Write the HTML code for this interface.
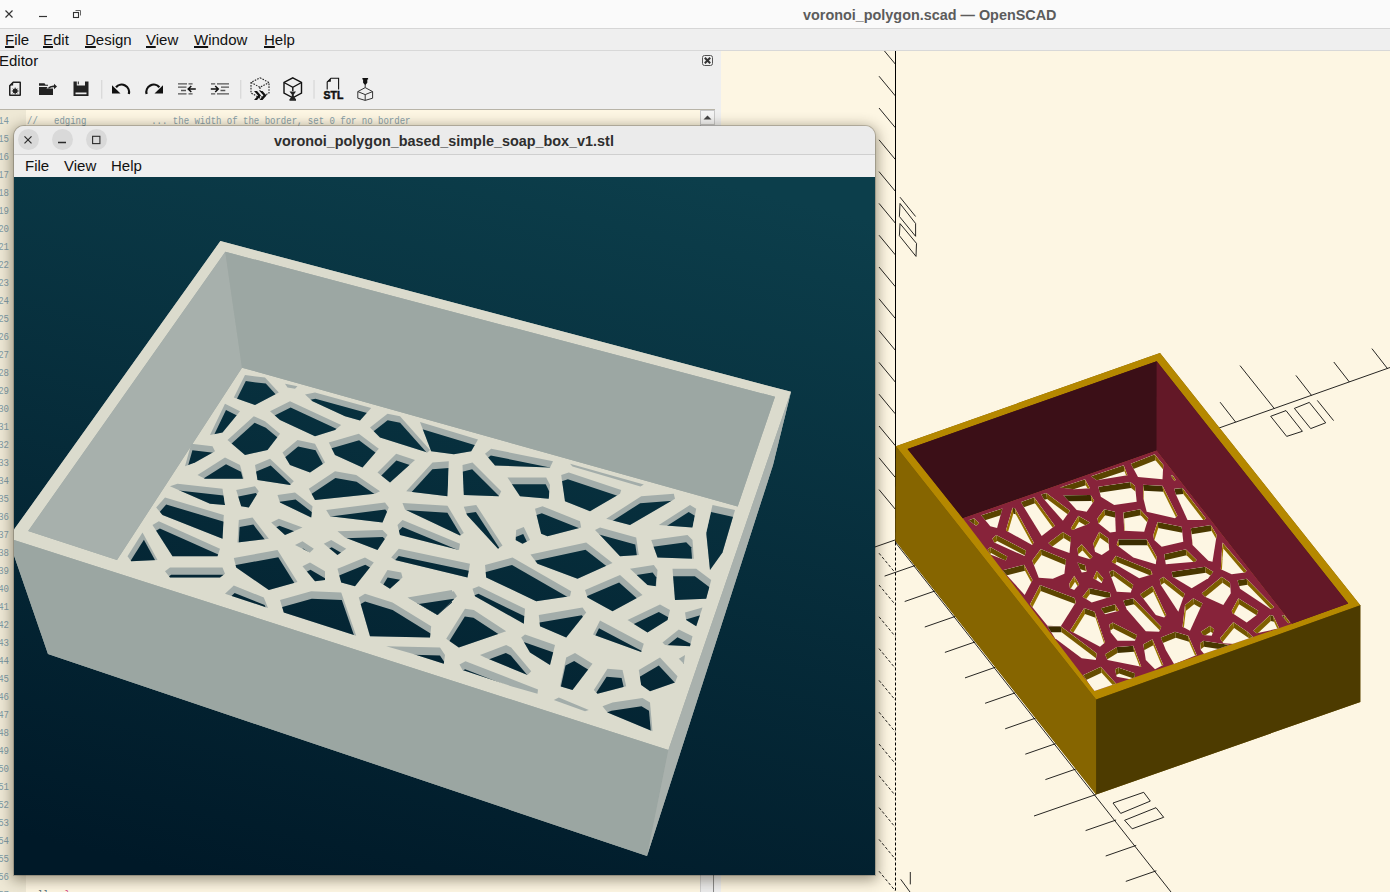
<!DOCTYPE html>
<html><head><meta charset="utf-8">
<style>
html,body{margin:0;padding:0;}
body{width:1390px;height:892px;overflow:hidden;position:relative;background:#efefef;font-family:"Liberation Sans",sans-serif;}
.abs{position:absolute;}
#titlebar{left:0;top:0;width:1390px;height:29px;background:#fafafa;border-bottom:1px solid #d6d6d6;box-sizing:border-box;}
#title{left:803px;top:7px;font-weight:bold;font-size:14.4px;color:#5c5c5c;white-space:nowrap;}
#menubar{left:0;top:29px;width:1390px;height:21px;background:#efefef;}
.mi{position:absolute;top:2px;font-size:15px;color:#111;white-space:nowrap;}
.mi u{text-decoration:underline;text-decoration-thickness:2px;text-underline-offset:1px;}
#dock{left:0;top:50px;width:721px;height:842px;background:#efefef;}
#editor{left:0;top:109px;width:715px;height:783px;background:#fdf6e3;border-top:1px solid #b8b4a8;box-sizing:border-box;overflow:hidden;}
#gutter{left:0;top:0;width:26px;height:783px;background:#eee8d5;}
.ln{position:absolute;left:-20px;width:29px;text-align:right;font-family:"Liberation Mono",monospace;font-size:10px;color:#7f9ba6;line-height:12px;transform:scaleX(0.9);transform-origin:right center;}
.code{position:absolute;left:27px;font-family:"Liberation Mono",monospace;font-size:10px;color:#88a0a8;white-space:pre;line-height:12px;transform:scaleX(0.9);transform-origin:left center;}
#view3d{left:721px;top:50px;width:669px;height:842px;background:#fdf6e3;overflow:hidden;}
#stlwin{left:14px;top:126px;width:861px;height:749px;background:#ebebeb;border-radius:10px 10px 0 0;box-shadow:0 0 0 1px rgba(0,0,0,0.18),0 3px 14px 2px rgba(40,30,10,0.45);overflow:hidden;}
#stltitle{left:0;top:0;width:861px;height:29px;background:#ebebeb;border-bottom:1px solid #cfcfcf;box-sizing:border-box;}
#stlmenu{left:0;top:29px;width:861px;height:22px;background:#efefef;}
.btn{position:absolute;top:3px;width:21px;height:21px;border-radius:50%;background:#d9d9d9;}
</style></head>
<body>
<div id="titlebar" class="abs">
  <svg class="abs" style="left:0;top:0" width="100" height="28">
    <path d="M5.5 10.5 L12.5 17.5 M12.5 10.5 L5.5 17.5" stroke="#333" stroke-width="1.2"/>
    <path d="M39 16.5 H47" stroke="#333" stroke-width="1.2"/>
    <rect x="73.5" y="12.5" width="5" height="5" fill="none" stroke="#333" stroke-width="1.1"/>
    <path d="M75.5 10.5 H80.5 V15.5" fill="none" stroke="#555" stroke-width="0.9"/>
  </svg>
  <div id="title" class="abs">voronoi_polygon.scad — OpenSCAD</div>
</div>
<div id="menubar" class="abs">
  <span class="mi" style="left:5px"><u>F</u>ile</span>
  <span class="mi" style="left:43px"><u>E</u>dit</span>
  <span class="mi" style="left:85px"><u>D</u>esign</span>
  <span class="mi" style="left:146px"><u>V</u>iew</span>
  <span class="mi" style="left:194px"><u>W</u>indow</span>
  <span class="mi" style="left:264px"><u>H</u>elp</span>
</div>
<div id="dock" class="abs">
  <div class="abs" style="left:-1px;top:2px;font-size:15px;color:#111">Editor</div>
  <svg class="abs" style="left:0;top:0" width="721" height="60" viewBox="0 50 721 60">
  <path d="M0 50.5 H721" stroke="#d8d8d8" stroke-width="1"/>
  <!-- close button -->
  <rect x="702.5" y="55.5" width="10" height="10" rx="2" fill="none" stroke="#555" stroke-width="1"/>
  <path d="M704.8 57.8 L710.2 63.2 M710.2 57.8 L704.8 63.2" stroke="#333" stroke-width="2"/>
  <g fill="#222" stroke="none">
    <!-- new -->
    <path d="M13 81.5 H20 Q21 81.5 21 82.5 V95 Q21 96 20 96 H10 Q9 96 9 95 V85.5 Z M13.6 83 L10.5 86.1 V94.5 H19.5 V83 Z" fill-rule="evenodd"/>
    <path d="M9.3 85.6 L13.1 81.8 V85.6 Z"/>
    <circle cx="15.2" cy="91" r="2.4"/>
    <path d="M15.2 87.6 V94.4 M11.8 91 H18.6 M12.8 88.6 L17.6 93.4 M17.6 88.6 L12.8 93.4" stroke="#222" stroke-width="0.9"/>
    <!-- open -->
    <path d="M39 83.2 H44.5 L45.5 84.8 H48 V85.8 H39 Z"/>
    <path d="M39 87 H47.5 L46.5 88.5 H53 V95 H39 Z"/>
    <path d="M47.5 88.2 Q50 85.3 54 85.6 V83.8 L57 86.5 L54 89.2 V87.3 Q51 87.2 49.2 88.4 Z"/>
    <!-- save -->
    <path d="M73.5 81.5 H76.8 V85.4 H85 V81.5 H88.5 V96 H73.5 Z M75.5 92.5 V94.2 H86.5 V92.5 Z" fill-rule="evenodd"/>
    <rect x="77.8" y="81.5" width="1" height="2.8"/>
  </g>
  <path d="M101.8 80 V98.7" stroke="#d2d2d2" stroke-width="1"/>
  <g fill="none" stroke="#111" stroke-width="2.2">
    <path d="M128.8 94 A7.4 7.4 0 0 0 116 87.3"/>
    <path d="M146.6 94 A7.4 7.4 0 0 1 159.4 87.3"/>
  </g>
  <g fill="#111">
    <path d="M112 85.2 L112 93.6 L120.5 93.6 Z"/>
    <path d="M163 85.2 L163 93.6 L154.5 93.6 Z"/>
  </g>
  <g stroke="#555" stroke-width="1.3">
    <path d="M178 83.9 H187 M188.5 83.9 H192.6 M178 87.2 H186.5 M181 90.5 H186 M178 93.9 H186.5 M188.5 93.9 H192.6"/>
    <path d="M211 83.9 H215.2 M217 83.9 H229 M221 87.2 H229 M220.5 90.5 H225.3 M211 93.9 H215.2 M217 93.9 H229"/>
  </g>
  <g fill="none" stroke="#111" stroke-width="1.5">
    <path d="M188 89 H195.8 M191.3 86 L188.2 89 L191.3 92"/>
    <path d="M210.8 89 H218.2 M215.2 86 L218.3 89 L215.2 92"/>
  </g>
  <path d="M240.8 80 V98.7 M314 80 V98.7" stroke="#d2d2d2" stroke-width="1"/>
  <!-- preview -->
  <g fill="none" stroke="#222" stroke-width="1.1" stroke-dasharray="1.6 1.2">
    <path d="M260 77.8 L269 82.5 V93 L260 98 L251 93 V82.5 Z"/>
    <path d="M251 82.5 L260 87.3 L269 82.5 M260 87.3 V91"/>
  </g>
  <g fill="#111">
    <path d="M254 91 H257 L261 95.5 L257 100 H254 L258 95.5 Z"/>
    <path d="M259.5 91 H262.5 L266.5 95.5 L262.5 100 H259.5 L263.5 95.5 Z"/>
  </g>
  <!-- render -->
  <g fill="none" stroke="#111" stroke-width="1.4">
    <path d="M292.8 77.8 L301.5 82.5 V93 L292.8 97.8 L284 93 V82.5 Z"/>
    <path d="M284 82.5 L292.8 87.3 L301.5 82.5 M292.8 87.3 V91"/>
  </g>
  <path d="M289.5 91.5 H296 L293.8 94.5 V96 L296 99.5 H289.5 L291.8 96 V94.5 Z" fill="#222"/>
  <rect x="289.5" y="99.2" width="6.5" height="1.5" fill="#111"/>
  <!-- STL -->
  <path d="M327.2 89.5 V82 L331 78.2 H338.6 V89.5" fill="none" stroke="#111" stroke-width="1.1"/>
  <path d="M327.3 81.8 L330.8 78.3 V81.8 Z" fill="#111"/>
  <text x="323.6" y="98.8" font-family="Liberation Sans" font-weight="bold" font-size="10" fill="#111" stroke="#111" stroke-width="0.5" textLength="19.8" lengthAdjust="spacingAndGlyphs">STL</text>
  <!-- 3d print -->
  <g fill="none" stroke="#333" stroke-width="1">
    <path d="M365.2 87.6 L372.6 91.6 V98.2 L365.2 100.4 L357.8 98.2 V91.6 Z"/>
    <path d="M357.8 91.6 L365.2 94.6 L372.6 91.6 M365.2 94.6 V100.4"/>
    <path d="M365.2 84.5 V87.6"/>
  </g>
  <path d="M362.4 78 H368.1 V79.4 H367.3 V82.8 L365.2 85.2 L363.1 82.8 V79.4 H362.4 Z" fill="#111"/>
  </svg>
</div>
<div id="editor" class="abs">
  <div id="gutter" class="abs"></div>
  <div class="ln" style="top:5.7px">14</div><div class="ln" style="top:23.7px">15</div><div class="ln" style="top:41.7px">16</div><div class="ln" style="top:59.7px">17</div><div class="ln" style="top:77.7px">18</div><div class="ln" style="top:95.7px">19</div><div class="ln" style="top:113.7px">20</div><div class="ln" style="top:131.7px">21</div><div class="ln" style="top:149.7px">22</div><div class="ln" style="top:167.7px">23</div><div class="ln" style="top:185.7px">24</div><div class="ln" style="top:203.7px">25</div><div class="ln" style="top:221.7px">26</div><div class="ln" style="top:239.7px">27</div><div class="ln" style="top:257.7px">28</div><div class="ln" style="top:275.7px">29</div><div class="ln" style="top:293.7px">30</div><div class="ln" style="top:311.7px">31</div><div class="ln" style="top:329.7px">32</div><div class="ln" style="top:347.7px">33</div><div class="ln" style="top:365.7px">34</div><div class="ln" style="top:383.7px">35</div><div class="ln" style="top:401.7px">36</div><div class="ln" style="top:419.7px">37</div><div class="ln" style="top:437.7px">38</div><div class="ln" style="top:455.7px">39</div><div class="ln" style="top:473.7px">40</div><div class="ln" style="top:491.7px">41</div><div class="ln" style="top:509.7px">42</div><div class="ln" style="top:527.7px">43</div><div class="ln" style="top:545.7px">44</div><div class="ln" style="top:563.7px">45</div><div class="ln" style="top:581.7px">46</div><div class="ln" style="top:599.7px">47</div><div class="ln" style="top:617.7px">48</div><div class="ln" style="top:635.7px">49</div><div class="ln" style="top:653.7px">50</div><div class="ln" style="top:671.7px">51</div><div class="ln" style="top:689.7px">52</div><div class="ln" style="top:707.7px">53</div><div class="ln" style="top:725.7px">54</div><div class="ln" style="top:743.7px">55</div><div class="ln" style="top:761.7px">56</div><div class="ln" style="top:779.7px">57</div>
  <div class="code" style="top:6px">//   edging            ... the width of the border, set 0 for no border</div>
  <div class="code" style="top:779.7px;color:#4a6a78">  ll</div><div class="code" style="top:779.7px;color:#d33682">       }</div>
  <div class="abs" style="left:700px;top:0;width:15px;height:783px;background:#ececec;border-left:1px solid #cfcfcf;box-sizing:border-box"></div>
  <div class="abs" style="left:700px;top:0;width:15px;height:15px;background:#f4f4f4;border:1px solid #c8c8c8;box-sizing:border-box"></div>
  <svg class="abs" style="left:700px;top:0" width="15" height="15"><path d="M3.5 9.5 H11.5 L7.5 5.5 Z" fill="#444"/></svg>
  <div class="abs" style="left:713px;top:760px;width:1px;height:23px;background:#8a8a8a"></div>

</div>
<div id="view3d" class="abs"><svg class="abs" style="left:-721px;top:-50px" width="1390" height="892" viewBox="0 0 1390 892">
  <g stroke="#000" stroke-width="0.85" fill="none">
    <path d="M895.5 50 V542.5" stroke-width="1"/>
    <path d="M895.5 542.5 V892" stroke-dasharray="3 2" stroke-width="1"/>
    <path d="M895.5 542.5 L1390 367.5"/>
    <path d="M895.5 542.5 L1171 892"/>
    <path d="M879 489.6 L895.25 509.2"/>
    <path d="M879 457.8 L895.25 477.4"/>
    <path d="M879 426.0 L895.25 445.6"/>
    <path d="M879 394.2 L895.25 413.8"/>
    <path d="M879 362.4 L895.25 382.0"/>
    <path d="M879 330.6 L895.25 350.2"/>
    <path d="M879 298.8 L895.25 318.4"/>
    <path d="M879 267.0 L895.25 286.6"/>
    <path d="M879 235.2 L895.25 254.8"/>
    <path d="M879 203.4 L895.25 223.0"/>
    <path d="M879 171.6 L895.25 191.2"/>
    <path d="M879 139.8 L895.25 159.4"/>
    <path d="M879 108.0 L895.25 127.6"/>
    <path d="M879 76.2 L895.25 95.8"/>
    <path d="M879 44.4 L895.25 64.0"/>
    <path d="M879 12.6 L895.25 32.2"/>
    <g stroke-dasharray="3 2"><path d="M879 553.2 L895.25 572.8"/><path d="M879 585.0 L895.25 604.6"/><path d="M879 616.8 L895.25 636.4"/><path d="M879 648.6 L895.25 668.2"/><path d="M879 680.4 L895.25 700.0"/><path d="M879 712.2 L895.25 731.8"/><path d="M879 744.0 L895.25 763.6"/><path d="M879 775.8 L895.25 795.4"/><path d="M879 807.6 L895.25 827.2"/><path d="M879 839.4 L895.25 859.0"/><path d="M879 871.2 L895.25 890.8"/></g>
    <path d="M1220.1 402.2 L1235.7 422.2"/><path d="M1240.0 365.6 L1274.3 408.6"/><path d="M1295.9 375.4 L1311.5 395.4"/><path d="M1333.8 362.0 L1349.4 382.0"/><path d="M1371.9 348.6 L1387.5 368.6"/>
    <path d="M864.5 550.6 L895.0 540.0"/><path d="M884.6 576.1 L915.1 565.5"/><path d="M904.7 601.5 L935.2 590.9"/><path d="M924.8 627.0 L955.3 616.4"/><path d="M944.9 652.4 L975.4 641.8"/><path d="M965.0 677.9 L995.5 667.2"/><path d="M985.1 703.3 L1015.6 692.7"/><path d="M1005.2 728.8 L1035.7 718.1"/><path d="M1025.3 754.2 L1055.8 743.6"/><path d="M1045.4 779.6 L1075.9 769.0"/><path d="M1034.0 816.0 L1096.0 794.5"/><path d="M1085.6 830.6 L1116.1 820.0"/><path d="M1105.7 856.0 L1136.2 845.4"/><path d="M1125.8 881.4 L1156.3 870.8"/><path d="M1145.9 906.9 L1176.4 896.3"/><path d="M1166.0 932.4 L1196.5 921.8"/>
    <path d="M900 197.2 L915.6 216.5"/>
    <path d="M900 203.5 L915.6 223.5 L915.6 236.3 L899.4 216.5 Z"/>
    <path d="M900 223.6 L916.5 243.4 L916 256.4 L899.4 235.7 Z"/>
    <path d="M1317.3 400.4 L1333.6 420.6"/>
    <path d="M1294.4 408.4 L1309.3 402.4 L1325.7 422.8 L1310.7 428.6 Z"/>
    <path d="M1270.7 416.3 L1286 410.6 L1302.4 431.3 L1286.7 436.4 Z"/>
    <path d="M1113 803 L1143.7 792.3 L1150.3 801.1 L1120.7 813.4 Z"/>
    <path d="M910.3 872 V884.4 M900.7 879.3 L910 892"/>
    <path d="M1124.6 820.3 L1156 807.7 L1163.7 817.3 L1132.2 828.8 Z"/>
  </g>
  <!-- box -->
  <polygon points="895.9,446.2 1160,353.1 1360.3,605.3 1360.3,702 1096.1,794.5 895.5,541" fill="#7a5c00"/>
  <polygon points="895.9,446.2 1160,353.1 1360.3,605.3 1096.1,699.5" fill="#b58800"/>
  <polygon points="895.9,446.2 1096.1,699.5 1096.1,794.5 895.5,541" fill="#866500"/>
  <polygon points="1096.1,699.5 1360.3,605.3 1360.3,702 1096.1,794.5" fill="#4d3b00"/>
  <polygon points="907.6,448.9 1156.7,361.2 1348.2,603.6 1291.9,623.8 1156.6,450.6 962.8,518.3" fill="#4a1420"/>
  <polygon points="907.6,448.9 1156.7,361.2 1156.6,450.6 962.8,518.3" fill="#3b0f17"/>
  <polygon points="1156.7,361.2 1348.2,603.6 1291.9,623.8 1156.6,450.6" fill="#631827"/>
  <polygon points="962.8,518.3 1156.6,450.6 1291.9,623.8 1094.5,691.1" fill="#87233a"/>
  <g id="scadholes"><defs><clipPath id="scadfloor"><polygon points="962.8,518.3 1156.6,450.6 1291.9,623.8 1094.5,691.1"/></clipPath><clipPath id="ch0"><polygon points="981.2,515.2 1002.4,508.4 997.1,528.1 990.3,526.3"/></clipPath><clipPath id="ch1"><polygon points="968.6,520.3 974.1,518.3 979.2,523.3 976.1,525.8"/></clipPath><clipPath id="ch2"><polygon points="1012.5,507.7 1015.0,508.2 1033.7,542.5 1032.1,545.0 1005.9,530.4"/></clipPath><clipPath id="ch3"><polygon points="1021.0,502.1 1034.2,497.3 1054.9,525.8 1041.7,535.9 1022.6,505.1"/></clipPath><clipPath id="ch4"><polygon points="1041.2,494.5 1046.3,493.0 1070.0,510.7 1062.9,520.8 1043.8,499.1"/></clipPath><clipPath id="ch5"><polygon points="992.3,538.4 996.3,534.9 1026.1,550.5 1024.6,556.1 994.3,542.5"/></clipPath><clipPath id="ch6"><polygon points="987.7,549.5 990.3,547.0 1007.4,556.6 1005.9,560.6 990.3,554.6"/></clipPath><clipPath id="ch7"><polygon points="1048.3,543.0 1062.9,531.9 1071.0,536.9 1069.5,553.1 1052.8,547.0"/></clipPath><clipPath id="ch8"><polygon points="1032.2,560.6 1040.7,549.0 1066.0,559.6 1064.4,573.8 1052.8,578.8 1038.7,577.8"/></clipPath><clipPath id="ch9"><polygon points="1130.8,463.7 1154.7,454.2 1163.3,464.7 1162.5,479.2 1138.0,477.0"/></clipPath><clipPath id="ch10"><polygon points="1090.8,476.3 1123.7,465.3 1127.5,475.3 1096.7,480.3"/></clipPath><clipPath id="ch11"><polygon points="1060.0,487.5 1085.0,479.2 1090.0,488.3 1074.2,489.2"/></clipPath><clipPath id="ch12"><polygon points="1098.3,486.7 1130.3,482.0 1135.0,485.8 1136.7,501.7 1114.2,505.0 1100.8,496.7"/></clipPath><clipPath id="ch13"><polygon points="1143.0,484.7 1162.5,485.8 1177.5,515.8 1175.0,518.3 1146.7,511.7 1143.3,498.3"/></clipPath><clipPath id="ch14"><polygon points="1063.3,495.3 1090.8,495.0 1094.2,500.8 1086.7,511.7 1076.7,510.0"/></clipPath><clipPath id="ch15"><polygon points="1097.5,518.3 1104.2,509.2 1115.0,511.7 1115.8,531.7 1110.0,532.5 1098.3,523.3"/></clipPath><clipPath id="ch16"><polygon points="1123.3,512.5 1140.0,509.2 1148.3,518.3 1144.2,531.7 1124.2,530.8"/></clipPath><clipPath id="ch17"><polygon points="1070.8,528.3 1078.3,515.8 1090.0,522.5 1085.8,525.0 1072.5,530.0"/></clipPath><clipPath id="ch18"><polygon points="1093.3,543.3 1099.2,531.7 1108.3,538.3 1109.2,550.0 1101.7,555.0 1095.0,551.7"/></clipPath><clipPath id="ch19"><polygon points="1116.7,545.0 1118.3,539.2 1146.7,539.2 1156.7,556.7 1155.8,564.2 1133.3,557.5"/></clipPath><clipPath id="ch20"><polygon points="1077.5,548.3 1081.7,544.2 1092.5,556.7 1090.0,559.2 1078.3,555.8"/></clipPath><clipPath id="ch21"><polygon points="1077.5,562.5 1085.0,565.0 1086.7,571.7 1081.7,572.5"/></clipPath><clipPath id="ch22"><polygon points="1111.7,561.7 1115.8,555.8 1150.8,570.0 1152.5,574.2 1139.2,578.3 1116.7,565.0"/></clipPath><clipPath id="ch23"><polygon points="1093.3,578.3 1096.7,570.8 1103.3,578.3 1101.7,583.3"/></clipPath><clipPath id="ch24"><polygon points="1069.2,583.8 1074.2,575.8 1079.2,584.2 1074.2,590.0 1070.0,588.3"/></clipPath><clipPath id="ch25"><polygon points="1153.3,535.0 1157.5,522.0 1181.7,526.7 1183.3,541.7 1161.7,546.7 1154.2,540.0"/></clipPath><clipPath id="ch26"><polygon points="1170.8,475.8 1172.5,475.0 1175.8,480.0 1174.2,480.8"/></clipPath><clipPath id="ch27"><polygon points="1174.2,488.7 1182.5,488.0 1205.8,518.3 1204.2,520.0 1187.5,520.0 1175.8,494.2"/></clipPath><clipPath id="ch28"><polygon points="1190.8,528.3 1210.8,525.0 1216.7,535.0 1212.5,561.7 1208.3,560.8 1192.5,545.0"/></clipPath><clipPath id="ch29"><polygon points="1222.5,542.5 1246.7,570.8 1245.0,572.5 1231.7,574.2 1220.8,569.2 1221.7,553.3"/></clipPath><clipPath id="ch30"><polygon points="1164.2,554.2 1185.8,549.2 1196.7,560.0 1195.0,561.7 1165.8,564.2"/></clipPath><clipPath id="ch31"><polygon points="1171.7,571.7 1205.0,566.7 1213.3,571.7 1208.3,578.3 1191.7,588.3 1172.5,576.7"/></clipPath><clipPath id="ch32"><polygon points="1002.5,570.3 1024.2,564.7 1032.5,580.0 1024.7,595.0 1005.0,573.3"/></clipPath><clipPath id="ch33"><polygon points="1030.0,604.2 1040.0,585.0 1074.7,598.0 1075.8,602.5 1060.8,626.3 1047.5,625.8"/></clipPath><clipPath id="ch34"><polygon points="1070.0,630.8 1084.2,608.0 1094.7,611.7 1105.0,642.5 1100.0,646.7"/></clipPath><clipPath id="ch35"><polygon points="1082.5,596.7 1089.2,588.0 1110.0,592.5 1110.8,596.7 1091.7,602.5"/></clipPath><clipPath id="ch36"><polygon points="1100.8,608.3 1115.0,604.2 1119.2,610.8 1105.0,614.2"/></clipPath><clipPath id="ch37"><polygon points="1109.2,571.7 1113.0,570.0 1133.3,584.7 1130.8,592.5 1116.7,591.7"/></clipPath><clipPath id="ch38"><polygon points="1123.3,600.5 1133.3,598.3 1161.3,626.7 1159.2,631.7 1145.8,631.3 1126.7,609.2"/></clipPath><clipPath id="ch39"><polygon points="1140.0,594.2 1152.5,585.8 1166.3,615.0 1164.2,617.5 1155.8,615.0"/></clipPath><clipPath id="ch40"><polygon points="1109.2,624.7 1112.5,622.5 1137.0,635.0 1135.0,640.8 1117.5,640.8 1110.8,632.5"/></clipPath><clipPath id="ch41"><polygon points="1047.5,626.3 1060.8,626.2 1096.7,653.3 1095.8,660.0 1081.7,658.3 1055.0,638.3"/></clipPath><clipPath id="ch42"><polygon points="1105.0,654.2 1116.7,647.0 1133.3,645.8 1141.3,666.7 1107.5,660.0"/></clipPath><clipPath id="ch43"><polygon points="1143.3,644.2 1152.5,639.2 1163.3,665.0 1155.0,669.2 1145.8,660.0"/></clipPath><clipPath id="ch44"><polygon points="1083.3,675.0 1100.8,666.7 1116.7,684.2 1112.5,693.7 1095.0,693.7"/></clipPath><clipPath id="ch45"><polygon points="1115.0,669.2 1118.3,667.5 1135.0,673.3 1134.2,680.0 1116.7,676.7"/></clipPath><clipPath id="ch46"><polygon points="1159.7,579.2 1163.3,576.7 1184.7,593.7 1178.3,611.7 1160.8,585.0"/></clipPath><clipPath id="ch47"><polygon points="1201.7,593.3 1221.7,576.7 1230.0,582.5 1230.8,593.3 1223.3,605.0 1205.0,596.7"/></clipPath><clipPath id="ch48"><polygon points="1237.5,580.3 1246.7,578.7 1274.2,607.0 1270.8,609.2 1240.0,588.7"/></clipPath><clipPath id="ch49"><polygon points="1185.0,605.0 1193.3,598.3 1202.5,603.3 1190.0,630.8 1182.5,626.7"/></clipPath><clipPath id="ch50"><polygon points="1231.7,610.8 1238.3,598.3 1258.3,610.8 1256.7,615.0 1246.7,622.5 1232.5,613.3"/></clipPath><clipPath id="ch51"><polygon points="1253.3,630.8 1270.0,615.0 1273.3,615.8 1279.2,628.3 1256.7,633.3"/></clipPath><clipPath id="ch52"><polygon points="1281.7,615.8 1284.2,615.0 1290.0,622.5 1288.3,623.3"/></clipPath><clipPath id="ch53"><polygon points="1220.0,638.3 1233.3,622.0 1247.5,631.7 1254.2,638.3 1238.3,644.2 1223.3,643.3"/></clipPath><clipPath id="ch54"><polygon points="1200.8,631.7 1210.0,625.8 1214.2,629.2 1211.7,635.8 1203.3,635.0"/></clipPath><clipPath id="ch55"><polygon points="1160.8,637.5 1175.0,631.7 1188.3,635.8 1196.7,655.0 1174.2,664.2 1165.8,650.0"/></clipPath><clipPath id="ch56"><polygon points="1200.0,643.3 1203.3,640.8 1230.0,645.0 1205.0,655.0 1200.8,650.0"/></clipPath></defs><g clip-path="url(#scadfloor)"><polygon points="981.2,515.2 1002.4,508.4 997.1,528.1 990.3,526.3" fill="#fdf6e3"/><g clip-path="url(#ch0)"><polygon points="981.2,515.2 1002.4,508.4 1003.2,514.4 982.0,521.2" fill="#594300"/></g><polygon points="968.6,520.3 974.1,518.3 979.2,523.3 976.1,525.8" fill="#fdf6e3"/><g clip-path="url(#ch1)"><polygon points="968.6,520.3 974.1,518.3 974.9,524.3 969.4,526.3" fill="#5c4500"/><polygon points="974.1,518.3 979.2,523.3 980.0,529.3 974.9,524.3" fill="#816100"/></g><polygon points="1012.5,507.7 1015.0,508.2 1033.7,542.5 1032.1,545.0 1005.9,530.4" fill="#fdf6e3"/><g clip-path="url(#ch2)"><polygon points="1012.5,507.7 1015.0,508.2 1015.8,514.2 1013.3,513.7" fill="#4e3a00"/><polygon points="1015.0,508.2 1033.7,542.5 1034.5,548.5 1015.8,514.2" fill="#936e00"/><polygon points="1005.9,530.4 1012.5,507.7 1013.3,513.7 1006.7,536.4" fill="#9b7400"/></g><polygon points="1021.0,502.1 1034.2,497.3 1054.9,525.8 1041.7,535.9 1022.6,505.1" fill="#fdf6e3"/><g clip-path="url(#ch3)"><polygon points="1021.0,502.1 1034.2,497.3 1035.0,503.3 1021.8,508.1" fill="#5c4500"/><polygon points="1034.2,497.3 1054.9,525.8 1055.7,531.8 1035.0,503.3" fill="#8c6900"/></g><polygon points="1041.2,494.5 1046.3,493.0 1070.0,510.7 1062.9,520.8 1043.8,499.1" fill="#fdf6e3"/><g clip-path="url(#ch4)"><polygon points="1041.2,494.5 1046.3,493.0 1047.1,499.0 1042.0,500.5" fill="#564100"/><polygon points="1046.3,493.0 1070.0,510.7 1070.8,516.7 1047.1,499.0" fill="#775900"/></g><polygon points="992.3,538.4 996.3,534.9 1026.1,550.5 1024.6,556.1 994.3,542.5" fill="#fdf6e3"/><g clip-path="url(#ch5)"><polygon points="992.3,538.4 996.3,534.9 997.1,540.9 993.1,544.4" fill="#7d5e00"/><polygon points="996.3,534.9 1026.1,550.5 1026.9,556.5 997.1,540.9" fill="#694f00"/></g><polygon points="987.7,549.5 990.3,547.0 1007.4,556.6 1005.9,560.6 990.3,554.6" fill="#fdf6e3"/><g clip-path="url(#ch6)"><polygon points="987.7,549.5 990.3,547.0 991.1,553.0 988.5,555.5" fill="#806000"/><polygon points="990.3,547.0 1007.4,556.6 1008.2,562.6 991.1,553.0" fill="#6b5100"/></g><polygon points="1048.3,543.0 1062.9,531.9 1071.0,536.9 1069.5,553.1 1052.8,547.0" fill="#fdf6e3"/><g clip-path="url(#ch7)"><polygon points="1048.3,543.0 1062.9,531.9 1063.7,537.9 1049.1,549.0" fill="#775900"/><polygon points="1062.9,531.9 1071.0,536.9 1071.8,542.9 1063.7,537.9" fill="#6f5300"/></g><polygon points="1032.2,560.6 1040.7,549.0 1066.0,559.6 1064.4,573.8 1052.8,578.8 1038.7,577.8" fill="#fdf6e3"/><g clip-path="url(#ch8)"><polygon points="1032.2,560.6 1040.7,549.0 1041.5,555.0 1033.0,566.6" fill="#8c6900"/><polygon points="1040.7,549.0 1066.0,559.6 1066.8,565.6 1041.5,555.0" fill="#614900"/></g><polygon points="1130.8,463.7 1154.7,454.2 1163.3,464.7 1162.5,479.2 1138.0,477.0" fill="#fdf6e3"/><g clip-path="url(#ch9)"><polygon points="1130.8,463.7 1154.7,454.2 1155.5,460.2 1131.6,469.7" fill="#5f4800"/><polygon points="1154.7,454.2 1163.3,464.7 1164.1,470.7 1155.5,460.2" fill="#886600"/></g><polygon points="1090.8,476.3 1123.7,465.3 1127.5,475.3 1096.7,480.3" fill="#fdf6e3"/><g clip-path="url(#ch10)"><polygon points="1090.8,476.3 1123.7,465.3 1124.5,471.3 1091.6,482.3" fill="#5a4400"/><polygon points="1123.7,465.3 1127.5,475.3 1128.3,481.3 1124.5,471.3" fill="#997300"/></g><polygon points="1060.0,487.5 1085.0,479.2 1090.0,488.3 1074.2,489.2" fill="#fdf6e3"/><g clip-path="url(#ch11)"><polygon points="1060.0,487.5 1085.0,479.2 1085.8,485.2 1060.8,493.5" fill="#5a4300"/><polygon points="1085.0,479.2 1090.0,488.3 1090.8,494.3 1085.8,485.2" fill="#936e00"/></g><polygon points="1098.3,486.7 1130.3,482.0 1135.0,485.8 1136.7,501.7 1114.2,505.0 1100.8,496.7" fill="#fdf6e3"/><g clip-path="url(#ch12)"><polygon points="1098.3,486.7 1130.3,482.0 1131.1,488.0 1099.1,492.7" fill="#483700"/><polygon points="1130.3,482.0 1135.0,485.8 1135.8,491.8 1131.1,488.0" fill="#7a5b00"/></g><polygon points="1143.0,484.7 1162.5,485.8 1177.5,515.8 1175.0,518.3 1146.7,511.7 1143.3,498.3" fill="#fdf6e3"/><g clip-path="url(#ch13)"><polygon points="1143.0,484.7 1162.5,485.8 1163.3,491.8 1143.8,490.7" fill="#3f3000"/><polygon points="1162.5,485.8 1177.5,515.8 1178.3,521.8 1163.3,491.8" fill="#956f00"/><polygon points="1143.3,498.3 1143.0,484.7 1143.8,490.7 1144.1,504.3" fill="#9f7700"/></g><polygon points="1063.3,495.3 1090.8,495.0 1094.2,500.8 1086.7,511.7 1076.7,510.0" fill="#fdf6e3"/><g clip-path="url(#ch14)"><polygon points="1063.3,495.3 1090.8,495.0 1091.6,501.0 1064.1,501.3" fill="#3b2c00"/><polygon points="1090.8,495.0 1094.2,500.8 1095.0,506.8 1091.6,501.0" fill="#916d00"/></g><polygon points="1097.5,518.3 1104.2,509.2 1115.0,511.7 1115.8,531.7 1110.0,532.5 1098.3,523.3" fill="#fdf6e3"/><g clip-path="url(#ch15)"><polygon points="1097.5,518.3 1104.2,509.2 1105.0,515.2 1098.3,524.3" fill="#8c6900"/><polygon points="1104.2,509.2 1115.0,511.7 1115.8,517.7 1105.0,515.2" fill="#513d00"/></g><polygon points="1123.3,512.5 1140.0,509.2 1148.3,518.3 1144.2,531.7 1124.2,530.8" fill="#fdf6e3"/><g clip-path="url(#ch16)"><polygon points="1123.3,512.5 1140.0,509.2 1140.8,515.2 1124.1,518.5" fill="#4d3a00"/><polygon points="1140.0,509.2 1148.3,518.3 1149.1,524.3 1140.8,515.2" fill="#856400"/><polygon points="1124.2,530.8 1123.3,512.5 1124.1,518.5 1125.0,536.8" fill="#9f7700"/></g><polygon points="1070.8,528.3 1078.3,515.8 1090.0,522.5 1085.8,525.0 1072.5,530.0" fill="#fdf6e3"/><g clip-path="url(#ch17)"><polygon points="1070.8,528.3 1078.3,515.8 1079.1,521.8 1071.6,534.3" fill="#916d00"/><polygon points="1078.3,515.8 1090.0,522.5 1090.8,528.5 1079.1,521.8" fill="#6c5100"/></g><polygon points="1093.3,543.3 1099.2,531.7 1108.3,538.3 1109.2,550.0 1101.7,555.0 1095.0,551.7" fill="#fdf6e3"/><g clip-path="url(#ch18)"><polygon points="1093.3,543.3 1099.2,531.7 1100.0,537.7 1094.1,549.3" fill="#946f00"/><polygon points="1099.2,531.7 1108.3,538.3 1109.1,544.3 1100.0,537.7" fill="#755800"/></g><polygon points="1116.7,545.0 1118.3,539.2 1146.7,539.2 1156.7,556.7 1155.8,564.2 1133.3,557.5" fill="#fdf6e3"/><g clip-path="url(#ch19)"><polygon points="1116.7,545.0 1118.3,539.2 1119.1,545.2 1117.5,551.0" fill="#9c7500"/><polygon points="1118.3,539.2 1146.7,539.2 1147.5,545.2 1119.1,545.2" fill="#3a2c00"/><polygon points="1146.7,539.2 1156.7,556.7 1157.5,562.7 1147.5,545.2" fill="#926d00"/></g><polygon points="1077.5,548.3 1081.7,544.2 1092.5,556.7 1090.0,559.2 1078.3,555.8" fill="#fdf6e3"/><g clip-path="url(#ch20)"><polygon points="1077.5,548.3 1081.7,544.2 1082.5,550.2 1078.3,554.3" fill="#816100"/><polygon points="1081.7,544.2 1092.5,556.7 1093.3,562.7 1082.5,550.2" fill="#876500"/><polygon points="1078.3,555.8 1077.5,548.3 1078.3,554.3 1079.1,561.8" fill="#9f7700"/></g><polygon points="1077.5,562.5 1085.0,565.0 1086.7,571.7 1081.7,572.5" fill="#fdf6e3"/><g clip-path="url(#ch21)"><polygon points="1077.5,562.5 1085.0,565.0 1085.8,571.0 1078.3,568.5" fill="#5a4400"/><polygon points="1085.0,565.0 1086.7,571.7 1087.5,577.7 1085.8,571.0" fill="#9c7500"/></g><polygon points="1111.7,561.7 1115.8,555.8 1150.8,570.0 1152.5,574.2 1139.2,578.3 1116.7,565.0" fill="#fdf6e3"/><g clip-path="url(#ch22)"><polygon points="1111.7,561.7 1115.8,555.8 1116.6,561.8 1112.5,567.7" fill="#8d6a00"/><polygon points="1115.8,555.8 1150.8,570.0 1151.6,576.0 1116.6,561.8" fill="#604800"/><polygon points="1150.8,570.0 1152.5,574.2 1153.3,580.2 1151.6,576.0" fill="#987200"/></g><polygon points="1093.3,578.3 1096.7,570.8 1103.3,578.3 1101.7,583.3" fill="#fdf6e3"/><g clip-path="url(#ch23)"><polygon points="1093.3,578.3 1096.7,570.8 1097.5,576.8 1094.1,584.3" fill="#967100"/><polygon points="1096.7,570.8 1103.3,578.3 1104.1,584.3 1097.5,576.8" fill="#866500"/></g><polygon points="1069.2,583.8 1074.2,575.8 1079.2,584.2 1074.2,590.0 1070.0,588.3" fill="#fdf6e3"/><g clip-path="url(#ch24)"><polygon points="1069.2,583.8 1074.2,575.8 1075.0,581.8 1070.0,589.8" fill="#906c00"/><polygon points="1074.2,575.8 1079.2,584.2 1080.0,590.2 1075.0,581.8" fill="#916d00"/></g><polygon points="1153.3,535.0 1157.5,522.0 1181.7,526.7 1183.3,541.7 1161.7,546.7 1154.2,540.0" fill="#fdf6e3"/><g clip-path="url(#ch25)"><polygon points="1153.3,535.0 1157.5,522.0 1158.3,528.0 1154.1,541.0" fill="#9b7400"/><polygon points="1157.5,522.0 1181.7,526.7 1182.5,532.7 1158.3,528.0" fill="#4d3a00"/></g><polygon points="1170.8,475.8 1172.5,475.0 1175.8,480.0 1174.2,480.8" fill="#fdf6e3"/><g clip-path="url(#ch26)"><polygon points="1170.8,475.8 1172.5,475.0 1173.3,481.0 1171.6,481.8" fill="#654c00"/><polygon points="1172.5,475.0 1175.8,480.0 1176.6,486.0 1173.3,481.0" fill="#8f6b00"/></g><polygon points="1174.2,488.7 1182.5,488.0 1205.8,518.3 1204.2,520.0 1187.5,520.0 1175.8,494.2" fill="#fdf6e3"/><g clip-path="url(#ch27)"><polygon points="1174.2,488.7 1182.5,488.0 1183.3,494.0 1175.0,494.7" fill="#423200"/><polygon points="1182.5,488.0 1205.8,518.3 1206.6,524.3 1183.3,494.0" fill="#8a6800"/></g><polygon points="1190.8,528.3 1210.8,525.0 1216.7,535.0 1212.5,561.7 1208.3,560.8 1192.5,545.0" fill="#fdf6e3"/><g clip-path="url(#ch28)"><polygon points="1190.8,528.3 1210.8,525.0 1211.6,531.0 1191.6,534.3" fill="#4a3800"/><polygon points="1210.8,525.0 1216.7,535.0 1217.5,541.0 1211.6,531.0" fill="#916d00"/><polygon points="1192.5,545.0 1190.8,528.3 1191.6,534.3 1193.3,551.0" fill="#9f7700"/></g><polygon points="1222.5,542.5 1246.7,570.8 1245.0,572.5 1231.7,574.2 1220.8,569.2 1221.7,553.3" fill="#fdf6e3"/><g clip-path="url(#ch29)"><polygon points="1222.5,542.5 1246.7,570.8 1247.5,576.8 1223.3,548.5" fill="#876500"/><polygon points="1220.8,569.2 1221.7,553.3 1222.5,559.3 1221.6,575.2" fill="#9f7700"/><polygon points="1221.7,553.3 1222.5,542.5 1223.3,548.5 1222.5,559.3" fill="#9f7700"/></g><polygon points="1164.2,554.2 1185.8,549.2 1196.7,560.0 1195.0,561.7 1165.8,564.2" fill="#fdf6e3"/><g clip-path="url(#ch30)"><polygon points="1164.2,554.2 1185.8,549.2 1186.6,555.2 1165.0,560.2" fill="#513d00"/><polygon points="1185.8,549.2 1196.7,560.0 1197.5,566.0 1186.6,555.2" fill="#816100"/></g><polygon points="1171.7,571.7 1205.0,566.7 1213.3,571.7 1208.3,578.3 1191.7,588.3 1172.5,576.7" fill="#fdf6e3"/><g clip-path="url(#ch31)"><polygon points="1171.7,571.7 1205.0,566.7 1205.8,572.7 1172.5,577.7" fill="#493700"/><polygon points="1205.0,566.7 1213.3,571.7 1214.1,577.7 1205.8,572.7" fill="#6e5300"/></g><polygon points="1002.5,570.3 1024.2,564.7 1032.5,580.0 1024.7,595.0 1005.0,573.3" fill="#fdf6e3"/><g clip-path="url(#ch32)"><polygon points="1002.5,570.3 1024.2,564.7 1025.0,570.7 1003.3,576.3" fill="#533e00"/><polygon points="1024.2,564.7 1032.5,580.0 1033.3,586.0 1025.0,570.7" fill="#936e00"/></g><polygon points="1030.0,604.2 1040.0,585.0 1074.7,598.0 1075.8,602.5 1060.8,626.3 1047.5,625.8" fill="#fdf6e3"/><g clip-path="url(#ch33)"><polygon points="1030.0,604.2 1040.0,585.0 1040.8,591.0 1030.8,610.2" fill="#946f00"/><polygon points="1040.0,585.0 1074.7,598.0 1075.5,604.0 1040.8,591.0" fill="#5d4600"/><polygon points="1074.7,598.0 1075.8,602.5 1076.6,608.5 1075.5,604.0" fill="#9d7500"/></g><polygon points="1070.0,630.8 1084.2,608.0 1094.7,611.7 1105.0,642.5 1100.0,646.7" fill="#fdf6e3"/><g clip-path="url(#ch34)"><polygon points="1070.0,630.8 1084.2,608.0 1085.0,614.0 1070.8,636.8" fill="#906c00"/><polygon points="1084.2,608.0 1094.7,611.7 1095.5,617.7 1085.0,614.0" fill="#5b4500"/><polygon points="1094.7,611.7 1105.0,642.5 1105.8,648.5 1095.5,617.7" fill="#9a7400"/></g><polygon points="1082.5,596.7 1089.2,588.0 1110.0,592.5 1110.8,596.7 1091.7,602.5" fill="#fdf6e3"/><g clip-path="url(#ch35)"><polygon points="1082.5,596.7 1089.2,588.0 1090.0,594.0 1083.3,602.7" fill="#8a6800"/><polygon points="1089.2,588.0 1110.0,592.5 1110.8,598.5 1090.0,594.0" fill="#4f3c00"/><polygon points="1110.0,592.5 1110.8,596.7 1111.6,602.7 1110.8,598.5" fill="#9e7600"/></g><polygon points="1100.8,608.3 1115.0,604.2 1119.2,610.8 1105.0,614.2" fill="#fdf6e3"/><g clip-path="url(#ch36)"><polygon points="1100.8,608.3 1115.0,604.2 1115.8,610.2 1101.6,614.3" fill="#564100"/><polygon points="1115.0,604.2 1119.2,610.8 1120.0,616.8 1115.8,610.2" fill="#906c00"/></g><polygon points="1109.2,571.7 1113.0,570.0 1133.3,584.7 1130.8,592.5 1116.7,591.7" fill="#fdf6e3"/><g clip-path="url(#ch37)"><polygon points="1109.2,571.7 1113.0,570.0 1113.8,576.0 1110.0,577.7" fill="#634b00"/><polygon points="1113.0,570.0 1133.3,584.7 1134.1,590.7 1113.8,576.0" fill="#755800"/></g><polygon points="1123.3,600.5 1133.3,598.3 1161.3,626.7 1159.2,631.7 1145.8,631.3 1126.7,609.2" fill="#fdf6e3"/><g clip-path="url(#ch38)"><polygon points="1123.3,600.5 1133.3,598.3 1134.1,604.3 1124.1,606.5" fill="#4f3c00"/><polygon points="1133.3,598.3 1161.3,626.7 1162.1,632.7 1134.1,604.3" fill="#826200"/></g><polygon points="1140.0,594.2 1152.5,585.8 1166.3,615.0 1164.2,617.5 1155.8,615.0" fill="#fdf6e3"/><g clip-path="url(#ch39)"><polygon points="1140.0,594.2 1152.5,585.8 1153.3,591.8 1140.8,600.2" fill="#725600"/><polygon points="1152.5,585.8 1166.3,615.0 1167.1,621.0 1153.3,591.8" fill="#967000"/></g><polygon points="1109.2,624.7 1112.5,622.5 1137.0,635.0 1135.0,640.8 1117.5,640.8 1110.8,632.5" fill="#fdf6e3"/><g clip-path="url(#ch40)"><polygon points="1109.2,624.7 1112.5,622.5 1113.3,628.5 1110.0,630.7" fill="#725600"/><polygon points="1112.5,622.5 1137.0,635.0 1137.8,641.0 1113.3,628.5" fill="#684e00"/></g><polygon points="1047.5,626.3 1060.8,626.2 1096.7,653.3 1095.8,660.0 1081.7,658.3 1055.0,638.3" fill="#fdf6e3"/><g clip-path="url(#ch41)"><polygon points="1047.5,626.3 1060.8,626.2 1061.6,632.2 1048.3,632.3" fill="#3a2c00"/><polygon points="1060.8,626.2 1096.7,653.3 1097.5,659.3 1061.6,632.2" fill="#775900"/></g><polygon points="1105.0,654.2 1116.7,647.0 1133.3,645.8 1141.3,666.7 1107.5,660.0" fill="#fdf6e3"/><g clip-path="url(#ch42)"><polygon points="1105.0,654.2 1116.7,647.0 1117.5,653.0 1105.8,660.2" fill="#6f5300"/><polygon points="1116.7,647.0 1133.3,645.8 1134.1,651.8 1117.5,653.0" fill="#413100"/><polygon points="1133.3,645.8 1141.3,666.7 1142.1,672.7 1134.1,651.8" fill="#997200"/></g><polygon points="1143.3,644.2 1152.5,639.2 1163.3,665.0 1155.0,669.2 1145.8,660.0" fill="#fdf6e3"/><g clip-path="url(#ch43)"><polygon points="1143.3,644.2 1152.5,639.2 1153.3,645.2 1144.1,650.2" fill="#6a5000"/><polygon points="1152.5,639.2 1163.3,665.0 1164.1,671.0 1153.3,645.2" fill="#987200"/></g><polygon points="1083.3,675.0 1100.8,666.7 1116.7,684.2 1112.5,693.7 1095.0,693.7" fill="#fdf6e3"/><g clip-path="url(#ch44)"><polygon points="1083.3,675.0 1100.8,666.7 1101.6,672.7 1084.1,681.0" fill="#654c00"/><polygon points="1100.8,666.7 1116.7,684.2 1117.5,690.2 1101.6,672.7" fill="#856400"/></g><polygon points="1115.0,669.2 1118.3,667.5 1135.0,673.3 1134.2,680.0 1116.7,676.7" fill="#fdf6e3"/><g clip-path="url(#ch45)"><polygon points="1115.0,669.2 1118.3,667.5 1119.1,673.5 1115.8,675.2" fill="#684e00"/><polygon points="1118.3,667.5 1135.0,673.3 1135.8,679.3 1119.1,673.5" fill="#5b4400"/></g><polygon points="1159.7,579.2 1163.3,576.7 1184.7,593.7 1178.3,611.7 1160.8,585.0" fill="#fdf6e3"/><g clip-path="url(#ch46)"><polygon points="1159.7,579.2 1163.3,576.7 1164.1,582.7 1160.5,585.2" fill="#745700"/><polygon points="1163.3,576.7 1184.7,593.7 1185.5,599.7 1164.1,582.7" fill="#795b00"/></g><polygon points="1201.7,593.3 1221.7,576.7 1230.0,582.5 1230.8,593.3 1223.3,605.0 1205.0,596.7" fill="#fdf6e3"/><g clip-path="url(#ch47)"><polygon points="1201.7,593.3 1221.7,576.7 1222.5,582.7 1202.5,599.3" fill="#7b5c00"/><polygon points="1221.7,576.7 1230.0,582.5 1230.8,588.5 1222.5,582.7" fill="#745700"/></g><polygon points="1237.5,580.3 1246.7,578.7 1274.2,607.0 1270.8,609.2 1240.0,588.7" fill="#fdf6e3"/><g clip-path="url(#ch48)"><polygon points="1237.5,580.3 1246.7,578.7 1247.5,584.7 1238.3,586.3" fill="#4b3900"/><polygon points="1246.7,578.7 1274.2,607.0 1275.0,613.0 1247.5,584.7" fill="#836200"/></g><polygon points="1185.0,605.0 1193.3,598.3 1202.5,603.3 1190.0,630.8 1182.5,626.7" fill="#fdf6e3"/><g clip-path="url(#ch49)"><polygon points="1185.0,605.0 1193.3,598.3 1194.1,604.3 1185.8,611.0" fill="#7a5b00"/><polygon points="1193.3,598.3 1202.5,603.3 1203.3,609.3 1194.1,604.3" fill="#6a5000"/><polygon points="1182.5,626.7 1185.0,605.0 1185.8,611.0 1183.3,632.7" fill="#9f7700"/></g><polygon points="1231.7,610.8 1238.3,598.3 1258.3,610.8 1256.7,615.0 1246.7,622.5 1232.5,613.3" fill="#fdf6e3"/><g clip-path="url(#ch50)"><polygon points="1231.7,610.8 1238.3,598.3 1239.1,604.3 1232.5,616.8" fill="#946f00"/><polygon points="1238.3,598.3 1258.3,610.8 1259.1,616.8 1239.1,604.3" fill="#705400"/></g><polygon points="1253.3,630.8 1270.0,615.0 1273.3,615.8 1279.2,628.3 1256.7,633.3" fill="#fdf6e3"/><g clip-path="url(#ch51)"><polygon points="1253.3,630.8 1270.0,615.0 1270.8,621.0 1254.1,636.8" fill="#806000"/><polygon points="1270.0,615.0 1273.3,615.8 1274.1,621.8 1270.8,621.0" fill="#523d00"/><polygon points="1273.3,615.8 1279.2,628.3 1280.0,634.3 1274.1,621.8" fill="#967000"/></g><polygon points="1281.7,615.8 1284.2,615.0 1290.0,622.5 1288.3,623.3" fill="#fdf6e3"/><g clip-path="url(#ch52)"><polygon points="1281.7,615.8 1284.2,615.0 1285.0,621.0 1282.5,621.8" fill="#594300"/><polygon points="1284.2,615.0 1290.0,622.5 1290.8,628.5 1285.0,621.0" fill="#8a6800"/></g><polygon points="1220.0,638.3 1233.3,622.0 1247.5,631.7 1254.2,638.3 1238.3,644.2 1223.3,643.3" fill="#fdf6e3"/><g clip-path="url(#ch53)"><polygon points="1220.0,638.3 1233.3,622.0 1234.1,628.0 1220.8,644.3" fill="#896600"/><polygon points="1233.3,622.0 1247.5,631.7 1248.3,637.7 1234.1,628.0" fill="#735600"/><polygon points="1247.5,631.7 1254.2,638.3 1255.0,644.3 1248.3,637.7" fill="#816100"/></g><polygon points="1200.8,631.7 1210.0,625.8 1214.2,629.2 1211.7,635.8 1203.3,635.0" fill="#fdf6e3"/><g clip-path="url(#ch54)"><polygon points="1200.8,631.7 1210.0,625.8 1210.8,631.8 1201.6,637.7" fill="#715500"/><polygon points="1210.0,625.8 1214.2,629.2 1215.0,635.2 1210.8,631.8" fill="#7a5b00"/></g><polygon points="1160.8,637.5 1175.0,631.7 1188.3,635.8 1196.7,655.0 1174.2,664.2 1165.8,650.0" fill="#fdf6e3"/><g clip-path="url(#ch55)"><polygon points="1160.8,637.5 1175.0,631.7 1175.8,637.7 1161.6,643.5" fill="#604800"/><polygon points="1175.0,631.7 1188.3,635.8 1189.1,641.8 1175.8,637.7" fill="#584200"/><polygon points="1188.3,635.8 1196.7,655.0 1197.5,661.0 1189.1,641.8" fill="#977100"/></g><polygon points="1200.0,643.3 1203.3,640.8 1230.0,645.0 1205.0,655.0 1200.8,650.0" fill="#fdf6e3"/><g clip-path="url(#ch56)"><polygon points="1200.0,643.3 1203.3,640.8 1204.1,646.8 1200.8,649.3" fill="#775900"/><polygon points="1203.3,640.8 1230.0,645.0 1230.8,651.0 1204.1,646.8" fill="#493700"/><polygon points="1200.8,650.0 1200.0,643.3 1200.8,649.3 1201.6,656.0" fill="#9f7700"/></g></g></g><!--/scadholes-->
</svg></div>
<div class="abs" style="left:0;top:50px;width:1390px;height:1px;background:#d8d8d8"></div>
<div id="stlwin" class="abs">
  <svg class="abs" style="left:-14px;top:-126px" width="1390" height="892" viewBox="0 0 1390 892">
  <defs>
    <linearGradient id="stlbg" gradientUnits="userSpaceOnUse" x1="540.6" y1="138.6" x2="349.4" y2="915.4">
      <stop offset="0" stop-color="#0c3e4b"/>
      <stop offset="1" stop-color="#001928"/>
    </linearGradient>
    <clipPath id="stlclip"><rect x="14" y="177" width="861" height="698"/></clipPath>
  </defs>
  <g clip-path="url(#stlclip)">
    <rect x="14" y="177" width="861" height="698" fill="url(#stlbg)"/>
    <polygon points="8,538 220.4,241.1 791,391.8 773,465 647,856 48,654" fill="#a0aaa6"/>
    <!-- outer top (rim + floor base) -->
    <polygon points="8,538 220.4,241.1 791,391.8 668.4,750" fill="#dbdbcd"/>
    <!-- front outer wall -->
    <polygon points="8,538 668.4,750 647,856 48,654" fill="#9ba6a2"/>
    <!-- right outer strip -->
    <polygon points="668.4,750 791,391.8 773,465 647,856" fill="#a9b1ad"/>
    <polygon points="28.2,530.9 225.3,251.8 775,396.8 737.7,506.4 242,367.7 117,560" fill="#a0aaa6"/>
    <!-- inner left wall -->
    <polygon points="28.2,530.9 225.3,251.8 242,367.7 117,560" fill="#a7b0ac"/>
    <!-- inner back wall -->
    <polygon points="225.3,251.8 775,396.8 737.7,506.4 242,367.7" fill="#9ca7a3"/>
    <g id="stlholes"><defs><clipPath id="sh0"><polygon points="245.0,375.0 265.0,377.5 278.8,392.5 255.0,405.0 233.8,397.5"/></clipPath><clipPath id="sh1"><polygon points="285.0,383.8 297.5,386.2 295.0,388.8 287.5,387.5"/></clipPath><clipPath id="sh2"><polygon points="305.0,394.5 315.0,392.5 371.2,408.0 360.0,420.5 345.0,416.2 312.5,401.2"/></clipPath><clipPath id="sh3"><polygon points="270.0,411.2 290.0,401.2 341.2,425.0 335.0,430.0 315.0,436.2 280.0,420.0"/></clipPath><clipPath id="sh4"><polygon points="370.0,427.5 387.5,413.8 400.0,416.2 430.0,450.0 427.5,452.5 380.0,437.5"/></clipPath><clipPath id="sh5"><polygon points="225.0,403.8 240.0,411.2 222.5,432.5 210.0,435.0"/></clipPath><clipPath id="sh6"><polygon points="227.5,440.0 253.8,416.2 265.0,421.2 280.0,433.8 267.5,450.0 245.0,455.0"/></clipPath><clipPath id="sh7"><polygon points="191.2,443.8 212.5,446.2 215.0,451.2 195.0,462.5 185.0,466.2"/></clipPath><clipPath id="sh8"><polygon points="197.5,475.0 225.0,457.5 240.0,465.0 243.8,478.8 205.0,478.8"/></clipPath><clipPath id="sh9"><polygon points="255.0,465.0 270.0,458.8 293.8,481.2 290.0,485.0 257.5,480.0"/></clipPath><clipPath id="sh10"><polygon points="282.5,452.5 297.5,440.0 315.0,443.8 325.0,462.5 310.0,472.5 290.0,465.0"/></clipPath><clipPath id="sh11"><polygon points="328.8,442.5 358.8,433.8 378.8,448.8 362.5,467.5 335.0,455.0"/></clipPath><clipPath id="sh12"><polygon points="377.5,472.5 396.2,453.8 415.0,460.0 390.0,482.5"/></clipPath><clipPath id="sh13"><polygon points="406.2,491.2 432.5,462.5 448.8,461.2 447.5,496.2"/></clipPath><clipPath id="sh14"><polygon points="308.8,488.8 335.0,471.2 356.2,475.0 380.0,491.2 375.0,493.8 315.0,500.0"/></clipPath><clipPath id="sh15"><polygon points="236.2,490.0 255.0,486.2 258.8,491.2 248.8,507.5 241.2,506.2"/></clipPath><clipPath id="sh16"><polygon points="170.0,486.2 177.5,483.8 222.5,488.8 225.0,505.0 210.0,503.8"/></clipPath><clipPath id="sh17"><polygon points="277.5,495.0 295.0,492.5 312.5,506.2 311.2,517.5 280.0,502.5"/></clipPath><clipPath id="sh18"><polygon points="326.2,510.0 385.0,502.5 388.8,507.5 382.5,522.5 330.0,516.2"/></clipPath><clipPath id="sh19"><polygon points="156.2,507.5 165.0,497.5 223.8,515.0 222.5,538.8 162.5,515.0"/></clipPath><clipPath id="sh20"><polygon points="238.8,520.0 252.5,517.5 268.8,538.8 237.5,542.5"/></clipPath><clipPath id="sh21"><polygon points="271.2,522.5 278.8,518.8 302.5,527.5 285.0,535.0"/></clipPath><clipPath id="sh22"><polygon points="152.5,525.0 158.8,521.2 220.0,548.8 217.5,556.2 172.5,556.2"/></clipPath><clipPath id="sh23"><polygon points="127.5,556.2 142.5,532.5 157.5,560.0 131.2,561.2"/></clipPath><clipPath id="sh24"><polygon points="337.5,531.2 382.5,530.0 387.5,535.0 377.5,550.0 345.0,537.5"/></clipPath><clipPath id="sh25"><polygon points="295.0,545.0 302.5,541.2 313.8,548.8 310.0,552.5"/></clipPath><clipPath id="sh26"><polygon points="323.8,543.8 331.2,540.0 346.2,548.8 337.5,555.0"/></clipPath><clipPath id="sh27"><polygon points="420.0,422.0 478.0,439.5 471.2,451.2 453.8,454.2 431.2,451.2"/></clipPath><clipPath id="sh28"><polygon points="402.5,503.0 447.5,505.8 463.8,533.0 460.0,535.5 405.0,509.5"/></clipPath><clipPath id="sh29"><polygon points="397.5,525.0 402.5,520.0 460.0,543.8 459.0,550.0 400.0,535.0"/></clipPath><clipPath id="sh30"><polygon points="485.0,453.8 491.2,448.8 553.0,461.2 550.0,467.5 495.0,465.5"/></clipPath><clipPath id="sh31"><polygon points="570.0,463.8 643.8,484.5 640.5,486.5 572.5,466.5"/></clipPath><clipPath id="sh32"><polygon points="462.5,465.0 472.5,462.5 501.2,491.2 498.8,496.2 463.8,495.0"/></clipPath><clipPath id="sh33"><polygon points="507.5,477.5 546.2,477.5 550.0,485.0 548.8,498.8 520.0,496.2"/></clipPath><clipPath id="sh34"><polygon points="561.2,475.0 568.8,472.5 621.2,490.0 620.0,493.8 590.0,511.2 565.0,501.2"/></clipPath><clipPath id="sh35"><polygon points="606.2,518.8 641.2,496.2 673.8,493.8 675.0,498.8 630.0,525.0"/></clipPath><clipPath id="sh36"><polygon points="658.8,525.0 690.0,505.0 696.2,508.8 692.5,527.5"/></clipPath><clipPath id="sh37"><polygon points="712.5,505.0 735.0,510.0 722.5,552.5 710.0,570.0 706.2,532.5"/></clipPath><clipPath id="sh38"><polygon points="463.8,506.8 476.2,505.0 502.5,545.5 498.0,548.8 467.0,515.0"/></clipPath><clipPath id="sh39"><polygon points="516.2,530.0 523.8,527.0 530.0,540.0 522.5,543.8 515.5,540.0"/></clipPath><clipPath id="sh40"><polygon points="535.0,508.8 542.5,506.2 580.0,521.2 581.2,527.5 547.5,536.2 541.2,533.8"/></clipPath><clipPath id="sh41"><polygon points="595.0,530.0 600.0,527.5 636.2,537.5 638.8,555.0 620.0,556.2 600.0,535.0"/></clipPath><clipPath id="sh42"><polygon points="651.2,540.0 687.5,535.0 692.5,540.0 693.8,558.8 657.5,557.5"/></clipPath><clipPath id="sh43"><polygon points="233.8,558.0 277.5,550.0 297.5,582.0 268.8,590.0 236.2,567.5"/></clipPath><clipPath id="sh44"><polygon points="165.0,571.2 170.0,567.5 222.5,567.5 225.0,573.8 220.0,577.5 170.0,577.5"/></clipPath><clipPath id="sh45"><polygon points="302.5,566.2 310.0,562.5 325.0,571.2 325.0,580.0 315.0,581.2"/></clipPath><clipPath id="sh46"><polygon points="337.5,568.8 365.0,557.5 373.8,562.5 355.0,586.2 341.2,582.5"/></clipPath><clipPath id="sh47"><polygon points="380.0,582.5 387.5,570.0 401.2,572.5 402.5,577.5 390.0,588.8"/></clipPath><clipPath id="sh48"><polygon points="225.0,593.8 233.8,585.5 263.8,597.5 268.0,608.0 232.5,596.2"/></clipPath><clipPath id="sh49"><polygon points="280.0,600.0 311.2,591.2 341.2,592.5 356.2,635.8 283.8,612.5"/></clipPath><clipPath id="sh50"><polygon points="358.8,597.5 365.0,593.8 392.5,602.5 431.2,626.2 430.0,637.5 370.0,636.2"/></clipPath><clipPath id="sh51"><polygon points="407.5,597.5 452.0,590.0 452.0,602.5 437.5,615.0"/></clipPath><clipPath id="sh52"><polygon points="386.2,646.2 440.0,647.5 445.0,655.0 443.8,663.8 412.5,653.8"/></clipPath><clipPath id="sh53"><polygon points="530.5,554.5 586.2,542.5 612.5,563.0 577.5,578.8 537.5,563.8"/></clipPath><clipPath id="sh54"><polygon points="485.0,565.0 512.5,557.5 571.2,591.2 570.0,596.2 536.2,601.2 486.2,577.5"/></clipPath><clipPath id="sh55"><polygon points="630.0,568.8 653.8,565.0 657.5,570.0 656.2,586.2 647.5,585.0"/></clipPath><clipPath id="sh56"><polygon points="672.5,568.8 696.2,568.8 711.2,580.0 706.2,598.8 675.0,600.0"/></clipPath><clipPath id="sh57"><polygon points="408.8,598.0 453.8,591.2 457.0,596.2 437.5,615.0"/></clipPath><clipPath id="sh58"><polygon points="472.5,588.8 478.8,586.2 525.0,608.8 523.8,623.8 475.0,596.2"/></clipPath><clipPath id="sh59"><polygon points="446.2,638.8 465.0,608.8 473.8,610.0 506.2,631.2 458.8,647.5"/></clipPath><clipPath id="sh60"><polygon points="538.8,615.0 582.5,607.5 586.2,612.5 566.2,637.5 540.0,626.2"/></clipPath><clipPath id="sh61"><polygon points="585.0,590.0 620.0,575.0 642.5,595.0 612.5,611.2 587.5,597.5"/></clipPath><clipPath id="sh62"><polygon points="593.0,634.5 600.0,620.5 643.8,643.8 641.2,652.0"/></clipPath><clipPath id="sh63"><polygon points="627.5,620.0 660.0,604.5 670.0,610.0 667.5,620.0 647.5,632.5"/></clipPath><clipPath id="sh64"><polygon points="685.0,612.5 702.5,607.5 696.2,626.2 686.2,620.0"/></clipPath><clipPath id="sh65"><polygon points="662.5,642.5 678.8,629.5 692.5,636.2 690.0,646.2 665.0,645.0"/></clipPath><clipPath id="sh66"><polygon points="521.2,637.5 525.0,634.5 555.0,645.0 550.0,665.0 530.0,652.5"/></clipPath><clipPath id="sh67"><polygon points="480.0,655.0 506.2,645.0 511.2,647.5 531.2,671.2 527.5,675.0 485.0,657.5"/></clipPath><clipPath id="sh68"><polygon points="566.2,657.5 575.0,653.0 592.5,663.8 572.5,690.0 560.0,686.2"/></clipPath><clipPath id="sh69"><polygon points="593.8,690.0 607.5,668.8 622.5,670.0 626.2,686.2 597.5,693.8"/></clipPath><clipPath id="sh70"><polygon points="638.8,670.0 660.0,657.5 677.5,676.2 675.0,682.5 650.0,691.2 641.2,685.0"/></clipPath><clipPath id="sh71"><polygon points="678.8,658.8 685.0,655.0 683.8,663.8"/></clipPath><clipPath id="sh72"><polygon points="459.5,664.5 465.5,661.2 538.0,689.5 537.5,693.8 511.2,686.2 462.5,670.0"/></clipPath><clipPath id="sh73"><polygon points="553.8,700.0 558.8,697.5 588.8,710.0 585.0,711.2"/></clipPath><clipPath id="sh74"><polygon points="602.5,706.2 612.5,702.5 642.5,698.0 650.0,702.5 652.5,731.2 607.5,712.5"/></clipPath><clipPath id="sh75"><polygon points="391.2,557.5 398.8,548.8 470.0,563.8 467.5,577.5 395.0,560.0"/></clipPath></defs><polygon points="245.0,375.0 265.0,377.5 278.8,392.5 255.0,405.0 233.8,397.5" fill="#a3adaa"/><polygon points="245.8,381.1 265.8,383.6 279.6,398.6 255.8,411.1 234.6,403.6" fill="url(#stlbg)" clip-path="url(#sh0)"/><polygon points="285.0,383.8 297.5,386.2 295.0,388.8 287.5,387.5" fill="#a3adaa"/><polygon points="285.6,389.9 298.1,392.4 295.6,394.9 288.1,393.6" fill="url(#stlbg)" clip-path="url(#sh1)"/><polygon points="305.0,394.5 315.0,392.5 371.2,408.0 360.0,420.5 345.0,416.2 312.5,401.2" fill="#a3adaa"/><polygon points="305.4,400.7 315.4,398.7 371.7,414.2 360.4,426.7 345.4,422.5 312.9,407.5" fill="url(#stlbg)" clip-path="url(#sh2)"/><polygon points="270.0,411.2 290.0,401.2 341.2,425.0 335.0,430.0 315.0,436.2 280.0,420.0" fill="#a3adaa"/><polygon points="270.6,417.6 290.6,407.6 341.8,431.3 335.6,436.3 315.6,442.6 280.6,426.3" fill="url(#stlbg)" clip-path="url(#sh3)"/><polygon points="370.0,427.5 387.5,413.8 400.0,416.2 430.0,450.0 427.5,452.5 380.0,437.5" fill="#a3adaa"/><polygon points="370.1,433.9 387.6,420.2 400.1,422.7 430.1,456.4 427.6,458.9 380.1,443.9" fill="url(#stlbg)" clip-path="url(#sh4)"/><polygon points="225.0,403.8 240.0,411.2 222.5,432.5 210.0,435.0" fill="#a3adaa"/><polygon points="226.0,410.1 241.0,417.6 223.5,438.8 211.0,441.3" fill="url(#stlbg)" clip-path="url(#sh5)"/><polygon points="227.5,440.0 253.8,416.2 265.0,421.2 280.0,433.8 267.5,450.0 245.0,455.0" fill="#a3adaa"/><polygon points="228.3,446.4 254.6,422.7 265.8,427.7 280.8,440.2 268.3,456.4 245.8,461.4" fill="url(#stlbg)" clip-path="url(#sh6)"/><polygon points="191.2,443.8 212.5,446.2 215.0,451.2 195.0,462.5 185.0,466.2" fill="#a3adaa"/><polygon points="192.4,450.3 213.6,452.8 216.1,457.8 196.1,469.1 186.1,472.8" fill="url(#stlbg)" clip-path="url(#sh7)"/><polygon points="197.5,475.0 225.0,457.5 240.0,465.0 243.8,478.8 205.0,478.8" fill="#a3adaa"/><polygon points="198.5,481.7 226.0,464.2 241.0,471.7 244.7,485.4 206.0,485.4" fill="url(#stlbg)" clip-path="url(#sh8)"/><polygon points="255.0,465.0 270.0,458.8 293.8,481.2 290.0,485.0 257.5,480.0" fill="#a3adaa"/><polygon points="255.7,471.7 270.7,465.4 294.5,487.9 290.7,491.7 258.2,486.7" fill="url(#stlbg)" clip-path="url(#sh9)"/><polygon points="282.5,452.5 297.5,440.0 315.0,443.8 325.0,462.5 310.0,472.5 290.0,465.0" fill="#a3adaa"/><polygon points="283.1,459.1 298.1,446.6 315.6,450.3 325.6,469.1 310.6,479.1 290.6,471.6" fill="url(#stlbg)" clip-path="url(#sh10)"/><polygon points="328.8,442.5 358.8,433.8 378.8,448.8 362.5,467.5 335.0,455.0" fill="#a3adaa"/><polygon points="329.1,449.0 359.1,440.3 379.1,455.3 362.8,474.0 335.3,461.5" fill="url(#stlbg)" clip-path="url(#sh11)"/><polygon points="377.5,472.5 396.2,453.8 415.0,460.0 390.0,482.5" fill="#a3adaa"/><polygon points="377.6,479.2 396.4,460.4 415.1,466.7 390.1,489.2" fill="url(#stlbg)" clip-path="url(#sh12)"/><polygon points="406.2,491.2 432.5,462.5 448.8,461.2 447.5,496.2" fill="#a3adaa"/><polygon points="406.2,498.0 432.4,469.2 448.7,468.0 447.4,503.0" fill="url(#stlbg)" clip-path="url(#sh13)"/><polygon points="308.8,488.8 335.0,471.2 356.2,475.0 380.0,491.2 375.0,493.8 315.0,500.0" fill="#a3adaa"/><polygon points="309.1,495.5 335.4,478.0 356.6,481.8 380.4,498.0 375.4,500.5 315.4,506.8" fill="url(#stlbg)" clip-path="url(#sh14)"/><polygon points="236.2,490.0 255.0,486.2 258.8,491.2 248.8,507.5 241.2,506.2" fill="#a3adaa"/><polygon points="237.1,496.8 255.9,493.1 259.6,498.1 249.6,514.3 242.1,513.1" fill="url(#stlbg)" clip-path="url(#sh15)"/><polygon points="170.0,486.2 177.5,483.8 222.5,488.8 225.0,505.0 210.0,503.8" fill="#a3adaa"/><polygon points="171.1,493.1 178.6,490.6 223.6,495.6 226.1,511.8 211.1,510.6" fill="url(#stlbg)" clip-path="url(#sh16)"/><polygon points="277.5,495.0 295.0,492.5 312.5,506.2 311.2,517.5 280.0,502.5" fill="#a3adaa"/><polygon points="278.1,501.9 295.6,499.4 313.1,513.1 311.9,524.4 280.6,509.4" fill="url(#stlbg)" clip-path="url(#sh17)"/><polygon points="326.2,510.0 385.0,502.5 388.8,507.5 382.5,522.5 330.0,516.2" fill="#a3adaa"/><polygon points="326.5,516.9 385.3,509.4 389.0,514.4 382.8,529.4 330.3,523.2" fill="url(#stlbg)" clip-path="url(#sh18)"/><polygon points="156.2,507.5 165.0,497.5 223.8,515.0 222.5,538.8 162.5,515.0" fill="#a3adaa"/><polygon points="157.4,514.5 166.2,504.5 224.9,522.0 223.7,545.7 163.7,522.0" fill="url(#stlbg)" clip-path="url(#sh19)"/><polygon points="238.8,520.0 252.5,517.5 268.8,538.8 237.5,542.5" fill="#a3adaa"/><polygon points="239.6,527.1 253.4,524.6 269.6,545.8 238.4,549.6" fill="url(#stlbg)" clip-path="url(#sh20)"/><polygon points="271.2,522.5 278.8,518.8 302.5,527.5 285.0,535.0" fill="#a3adaa"/><polygon points="271.9,529.5 279.4,525.8 303.2,534.5 285.7,542.0" fill="url(#stlbg)" clip-path="url(#sh21)"/><polygon points="152.5,525.0 158.8,521.2 220.0,548.8 217.5,556.2 172.5,556.2" fill="#a3adaa"/><polygon points="153.7,532.1 159.9,528.4 221.2,555.9 218.7,563.4 173.7,563.4" fill="url(#stlbg)" clip-path="url(#sh22)"/><polygon points="127.5,556.2 142.5,532.5 157.5,560.0 131.2,561.2" fill="#a3adaa"/><polygon points="128.9,563.5 143.9,539.7 158.9,567.2 132.7,568.5" fill="url(#stlbg)" clip-path="url(#sh23)"/><polygon points="337.5,531.2 382.5,530.0 387.5,535.0 377.5,550.0 345.0,537.5" fill="#a3adaa"/><polygon points="337.8,538.4 382.8,537.1 387.8,542.1 377.8,557.1 345.3,544.6" fill="url(#stlbg)" clip-path="url(#sh24)"/><polygon points="295.0,545.0 302.5,541.2 313.8,548.8 310.0,552.5" fill="#a3adaa"/><polygon points="295.6,552.2 303.1,548.4 314.3,555.9 310.6,559.7" fill="url(#stlbg)" clip-path="url(#sh25)"/><polygon points="323.8,543.8 331.2,540.0 346.2,548.8 337.5,555.0" fill="#a3adaa"/><polygon points="324.2,550.9 331.7,547.2 346.7,555.9 337.9,562.2" fill="url(#stlbg)" clip-path="url(#sh26)"/><polygon points="420.0,422.0 478.0,439.5 471.2,451.2 453.8,454.2 431.2,451.2" fill="#a3adaa"/><polygon points="419.8,428.5 477.8,446.0 471.1,457.7 453.6,460.7 431.1,457.7" fill="url(#stlbg)" clip-path="url(#sh27)"/><polygon points="402.5,503.0 447.5,505.8 463.8,533.0 460.0,535.5 405.0,509.5" fill="#a3adaa"/><polygon points="402.4,510.0 447.4,512.7 463.7,540.0 459.9,542.5 404.9,516.5" fill="url(#stlbg)" clip-path="url(#sh28)"/><polygon points="397.5,525.0 402.5,520.0 460.0,543.8 459.0,550.0 400.0,535.0" fill="#a3adaa"/><polygon points="397.5,532.1 402.5,527.1 460.0,550.8 459.0,557.1 400.0,542.1" fill="url(#stlbg)" clip-path="url(#sh29)"/><polygon points="485.0,453.8 491.2,448.8 553.0,461.2 550.0,467.5 495.0,465.5" fill="#a3adaa"/><polygon points="484.5,460.4 490.8,455.4 552.5,467.9 549.5,474.1 494.5,472.1" fill="url(#stlbg)" clip-path="url(#sh30)"/><polygon points="570.0,463.8 643.8,484.5 640.5,486.5 572.5,466.5" fill="#a3adaa"/><polygon points="569.1,470.5 642.8,491.2 639.6,493.2 571.6,473.2" fill="url(#stlbg)" clip-path="url(#sh31)"/><polygon points="462.5,465.0 472.5,462.5 501.2,491.2 498.8,496.2 463.8,495.0" fill="#a3adaa"/><polygon points="462.2,471.8 472.2,469.2 501.0,498.0 498.5,503.0 463.5,501.8" fill="url(#stlbg)" clip-path="url(#sh32)"/><polygon points="507.5,477.5 546.2,477.5 550.0,485.0 548.8,498.8 520.0,496.2" fill="#a3adaa"/><polygon points="506.9,484.3 545.7,484.3 549.4,491.8 548.2,505.5 519.4,503.0" fill="url(#stlbg)" clip-path="url(#sh33)"/><polygon points="561.2,475.0 568.8,472.5 621.2,490.0 620.0,493.8 590.0,511.2 565.0,501.2" fill="#a3adaa"/><polygon points="560.4,481.8 567.9,479.3 620.4,496.8 619.2,500.6 589.2,518.1 564.2,508.1" fill="url(#stlbg)" clip-path="url(#sh34)"/><polygon points="606.2,518.8 641.2,496.2 673.8,493.8 675.0,498.8 630.0,525.0" fill="#a3adaa"/><polygon points="605.1,525.7 640.1,503.2 672.6,500.7 673.9,505.7 628.9,531.9" fill="url(#stlbg)" clip-path="url(#sh35)"/><polygon points="658.8,525.0 690.0,505.0 696.2,508.8 692.5,527.5" fill="#a3adaa"/><polygon points="657.4,532.0 688.7,512.0 694.9,515.7 691.2,534.5" fill="url(#stlbg)" clip-path="url(#sh36)"/><polygon points="712.5,505.0 735.0,510.0 722.5,552.5 710.0,570.0 706.2,532.5" fill="#a3adaa"/><polygon points="711.0,512.1 733.5,517.1 721.0,559.6 708.5,577.1 704.8,539.6" fill="url(#stlbg)" clip-path="url(#sh37)"/><polygon points="463.8,506.8 476.2,505.0 502.5,545.5 498.0,548.8 467.0,515.0" fill="#a3adaa"/><polygon points="463.4,513.8 475.9,512.0 502.2,552.5 497.7,555.8 466.7,522.0" fill="url(#stlbg)" clip-path="url(#sh38)"/><polygon points="516.2,530.0 523.8,527.0 530.0,540.0 522.5,543.8 515.5,540.0" fill="#a3adaa"/><polygon points="515.7,537.1 523.2,534.1 529.5,547.1 522.0,550.9 515.0,547.1" fill="url(#stlbg)" clip-path="url(#sh39)"/><polygon points="535.0,508.8 542.5,506.2 580.0,521.2 581.2,527.5 547.5,536.2 541.2,533.8" fill="#a3adaa"/><polygon points="534.3,515.8 541.8,513.3 579.3,528.3 580.6,534.5 546.8,543.3 540.6,540.8" fill="url(#stlbg)" clip-path="url(#sh40)"/><polygon points="595.0,530.0 600.0,527.5 636.2,537.5 638.8,555.0 620.0,556.2 600.0,535.0" fill="#a3adaa"/><polygon points="594.0,537.1 599.0,534.6 635.3,544.6 637.8,562.1 619.0,563.4 599.0,542.1" fill="url(#stlbg)" clip-path="url(#sh41)"/><polygon points="651.2,540.0 687.5,535.0 692.5,540.0 693.8,558.8 657.5,557.5" fill="#a3adaa"/><polygon points="650.0,547.2 686.2,542.2 691.2,547.2 692.5,565.9 656.2,564.7" fill="url(#stlbg)" clip-path="url(#sh42)"/><polygon points="233.8,558.0 277.5,550.0 297.5,582.0 268.8,590.0 236.2,567.5" fill="#a3adaa"/><polygon points="234.5,565.3 278.3,557.3 298.3,589.3 269.5,597.3 237.0,574.8" fill="url(#stlbg)" clip-path="url(#sh43)"/><polygon points="165.0,571.2 170.0,567.5 222.5,567.5 225.0,573.8 220.0,577.5 170.0,577.5" fill="#a3adaa"/><polygon points="166.1,578.6 171.1,574.8 223.6,574.8 226.1,581.1 221.1,584.8 171.1,584.8" fill="url(#stlbg)" clip-path="url(#sh44)"/><polygon points="302.5,566.2 310.0,562.5 325.0,571.2 325.0,580.0 315.0,581.2" fill="#a3adaa"/><polygon points="303.0,573.6 310.5,569.8 325.5,578.6 325.5,587.3 315.5,588.6" fill="url(#stlbg)" clip-path="url(#sh45)"/><polygon points="337.5,568.8 365.0,557.5 373.8,562.5 355.0,586.2 341.2,582.5" fill="#a3adaa"/><polygon points="337.8,576.1 365.3,564.8 374.1,569.8 355.3,593.6 341.6,589.8" fill="url(#stlbg)" clip-path="url(#sh46)"/><polygon points="380.0,582.5 387.5,570.0 401.2,572.5 402.5,577.5 390.0,588.8" fill="#a3adaa"/><polygon points="380.1,589.9 387.6,577.4 401.4,579.9 402.6,584.9 390.1,596.1" fill="url(#stlbg)" clip-path="url(#sh47)"/><polygon points="225.0,593.8 233.8,585.5 263.8,597.5 268.0,608.0 232.5,596.2" fill="#a3adaa"/><polygon points="225.9,601.3 234.6,593.0 264.6,605.0 268.9,615.5 233.4,603.8" fill="url(#stlbg)" clip-path="url(#sh48)"/><polygon points="280.0,600.0 311.2,591.2 341.2,592.5 356.2,635.8 283.8,612.5" fill="#a3adaa"/><polygon points="280.5,607.6 311.8,598.8 341.8,600.1 356.8,643.3 284.3,620.1" fill="url(#stlbg)" clip-path="url(#sh49)"/><polygon points="358.8,597.5 365.0,593.8 392.5,602.5 431.2,626.2 430.0,637.5 370.0,636.2" fill="#a3adaa"/><polygon points="358.9,605.1 365.1,601.4 392.6,610.1 431.4,633.9 430.1,645.1 370.1,643.9" fill="url(#stlbg)" clip-path="url(#sh50)"/><polygon points="407.5,597.5 452.0,590.0 452.0,602.5 437.5,615.0" fill="#a3adaa"/><polygon points="407.4,605.0 451.9,597.5 451.9,610.0 437.4,622.5" fill="url(#stlbg)" clip-path="url(#sh51)"/><polygon points="386.2,646.2 440.0,647.5 445.0,655.0 443.8,663.8 412.5,653.8" fill="#a3adaa"/><polygon points="386.2,654.1 440.0,655.4 445.0,662.9 443.7,671.6 412.5,661.6" fill="url(#stlbg)" clip-path="url(#sh52)"/><polygon points="530.5,554.5 586.2,542.5 612.5,563.0 577.5,578.8 537.5,563.8" fill="#a3adaa"/><polygon points="529.8,561.8 585.5,549.8 611.8,570.3 576.8,586.0 536.8,571.0" fill="url(#stlbg)" clip-path="url(#sh53)"/><polygon points="485.0,565.0 512.5,557.5 571.2,591.2 570.0,596.2 536.2,601.2 486.2,577.5" fill="#a3adaa"/><polygon points="484.5,572.4 512.0,564.9 570.7,598.7 569.5,603.7 535.7,608.7 485.7,584.9" fill="url(#stlbg)" clip-path="url(#sh54)"/><polygon points="630.0,568.8 653.8,565.0 657.5,570.0 656.2,586.2 647.5,585.0" fill="#a3adaa"/><polygon points="628.9,576.1 652.6,572.4 656.4,577.4 655.1,593.6 646.4,592.4" fill="url(#stlbg)" clip-path="url(#sh55)"/><polygon points="672.5,568.8 696.2,568.8 711.2,580.0 706.2,598.8 675.0,600.0" fill="#a3adaa"/><polygon points="671.1,576.2 694.9,576.2 709.9,587.4 704.9,606.2 673.6,607.4" fill="url(#stlbg)" clip-path="url(#sh56)"/><polygon points="408.8,598.0 453.8,591.2 457.0,596.2 437.5,615.0" fill="#a3adaa"/><polygon points="408.7,605.5 453.7,598.8 456.9,603.8 437.4,622.5" fill="url(#stlbg)" clip-path="url(#sh57)"/><polygon points="472.5,588.8 478.8,586.2 525.0,608.8 523.8,623.8 475.0,596.2" fill="#a3adaa"/><polygon points="472.1,596.3 478.4,593.8 524.6,616.3 523.4,631.3 474.6,603.8" fill="url(#stlbg)" clip-path="url(#sh58)"/><polygon points="446.2,638.8 465.0,608.8 473.8,610.0 506.2,631.2 458.8,647.5" fill="#a3adaa"/><polygon points="446.0,646.5 464.8,616.5 473.5,617.7 506.0,639.0 458.5,655.2" fill="url(#stlbg)" clip-path="url(#sh59)"/><polygon points="538.8,615.0 582.5,607.5 586.2,612.5 566.2,637.5 540.0,626.2" fill="#a3adaa"/><polygon points="538.0,622.7 581.8,615.2 585.5,620.2 565.5,645.2 539.3,633.9" fill="url(#stlbg)" clip-path="url(#sh60)"/><polygon points="585.0,590.0 620.0,575.0 642.5,595.0 612.5,611.2 587.5,597.5" fill="#a3adaa"/><polygon points="584.1,597.5 619.1,582.5 641.6,602.5 611.6,618.7 586.6,605.0" fill="url(#stlbg)" clip-path="url(#sh61)"/><polygon points="593.0,634.5 600.0,620.5 643.8,643.8 641.2,652.0" fill="#a3adaa"/><polygon points="592.0,642.3 599.0,628.3 642.8,651.5 640.3,659.8" fill="url(#stlbg)" clip-path="url(#sh62)"/><polygon points="627.5,620.0 660.0,604.5 670.0,610.0 667.5,620.0 647.5,632.5" fill="#a3adaa"/><polygon points="626.3,627.6 658.8,612.1 668.8,617.6 666.3,627.6 646.3,640.1" fill="url(#stlbg)" clip-path="url(#sh63)"/><polygon points="685.0,612.5 702.5,607.5 696.2,626.2 686.2,620.0" fill="#a3adaa"/><polygon points="683.6,620.1 701.1,615.1 694.9,633.9 684.9,627.6" fill="url(#stlbg)" clip-path="url(#sh64)"/><polygon points="662.5,642.5 678.8,629.5 692.5,636.2 690.0,646.2 665.0,645.0" fill="#a3adaa"/><polygon points="661.2,650.3 677.5,637.3 691.2,644.0 688.7,654.0 663.7,652.8" fill="url(#stlbg)" clip-path="url(#sh65)"/><polygon points="521.2,637.5 525.0,634.5 555.0,645.0 550.0,665.0 530.0,652.5" fill="#a3adaa"/><polygon points="520.7,645.3 524.4,642.3 554.4,652.8 549.4,672.8 529.4,660.3" fill="url(#stlbg)" clip-path="url(#sh66)"/><polygon points="480.0,655.0 506.2,645.0 511.2,647.5 531.2,671.2 527.5,675.0 485.0,657.5" fill="#a3adaa"/><polygon points="479.6,662.9 505.8,652.9 510.8,655.4 530.8,679.2 527.1,682.9 484.6,665.4" fill="url(#stlbg)" clip-path="url(#sh67)"/><polygon points="566.2,657.5 575.0,653.0 592.5,663.8 572.5,690.0 560.0,686.2" fill="#a3adaa"/><polygon points="565.5,665.5 574.2,661.0 591.7,671.7 571.7,698.0 559.2,694.2" fill="url(#stlbg)" clip-path="url(#sh68)"/><polygon points="593.8,690.0 607.5,668.8 622.5,670.0 626.2,686.2 597.5,693.8" fill="#a3adaa"/><polygon points="592.8,698.1 606.6,676.8 621.6,678.1 625.3,694.3 596.6,701.8" fill="url(#stlbg)" clip-path="url(#sh69)"/><polygon points="638.8,670.0 660.0,657.5 677.5,676.2 675.0,682.5 650.0,691.2 641.2,685.0" fill="#a3adaa"/><polygon points="637.6,678.0 658.8,665.5 676.3,684.3 673.8,690.5 648.8,699.3 640.1,693.0" fill="url(#stlbg)" clip-path="url(#sh70)"/><polygon points="678.8,658.8 685.0,655.0 683.8,663.8" fill="#a3adaa"/><polygon points="677.4,666.7 683.7,662.9 682.4,671.7" fill="url(#stlbg)" clip-path="url(#sh71)"/><polygon points="459.5,664.5 465.5,661.2 538.0,689.5 537.5,693.8 511.2,686.2 462.5,670.0" fill="#a3adaa"/><polygon points="459.1,672.5 465.1,669.3 537.6,697.5 537.1,701.8 510.9,694.3 462.1,678.0" fill="url(#stlbg)" clip-path="url(#sh72)"/><polygon points="553.8,700.0 558.8,697.5 588.8,710.0 585.0,711.2" fill="#a3adaa"/><polygon points="553.0,708.2 558.0,705.7 588.0,718.2 584.2,719.5" fill="url(#stlbg)" clip-path="url(#sh73)"/><polygon points="602.5,706.2 612.5,702.5 642.5,698.0 650.0,702.5 652.5,731.2 607.5,712.5" fill="#a3adaa"/><polygon points="601.5,714.5 611.5,710.7 641.5,706.2 649.0,710.7 651.5,739.5 606.5,720.7" fill="url(#stlbg)" clip-path="url(#sh74)"/><polygon points="391.2,557.5 398.8,548.8 470.0,563.8 467.5,577.5 395.0,560.0" fill="#a3adaa"/><polygon points="391.2,564.8 398.7,556.0 470.0,571.0 467.5,584.8 395.0,567.3" fill="url(#stlbg)" clip-path="url(#sh75)"/></g><!--/stlholes-->
  </g>
</svg>
  <div id="stltitle" class="abs">
    <div class="btn" style="left:3.5px"></div><div class="btn" style="left:37.5px"></div><div class="btn" style="left:71.5px"></div>
    <svg class="abs" style="left:0;top:0" width="100" height="29">
      <path d="M10.5 10.3 L17.5 17.3 M17.5 10.3 L10.5 17.3" stroke="#2a2a2a" stroke-width="1.2"/>
      <path d="M44 16.5 H52" stroke="#2a2a2a" stroke-width="1.3"/>
      <rect x="78.6" y="10.3" width="7.3" height="7.3" fill="none" stroke="#2a2a2a" stroke-width="1.1"/>
    </svg>
    <div class="abs" style="left:260px;top:7px;font-weight:bold;font-size:14.4px;color:#2e2e2e;white-space:nowrap" id="stlt">voronoi_polygon_based_simple_soap_box_v1.stl</div>
  </div>
  <div id="stlmenu" class="abs">
    <span class="mi" style="left:11px;top:2px">File</span>
    <span class="mi" style="left:50px;top:2px">View</span>
    <span class="mi" style="left:97px;top:2px">Help</span>
  </div>
</div>
</body></html>
